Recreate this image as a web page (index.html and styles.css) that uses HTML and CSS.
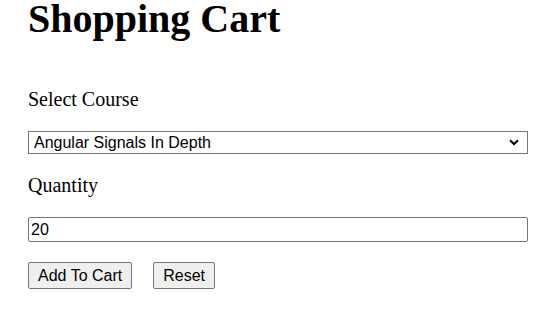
FILE: index.html
```html
<!DOCTYPE html>
<html lang="en">
<head>
    <meta charset="UTF-8">
    <meta name="viewport" content="width=device-width, initial-scale=1.0">
    <title>Shopping Cart</title>
    <link rel="stylesheet" href="styles.css">
</head>
<body>
    <div class="cart">
        <h1>Shopping Cart</h1>

        <form class="cart-form">
            <label class="field-label" for="course">Select Course</label>
            <select id="course" class="field">
                <option>Angular Signals In Depth</option>
                <option>Angular Core Deep Dive</option>
                <option>RxJs In Practice</option>
            </select>

            <label class="field-label" for="quantity">Quantity</label>
            <input id="quantity" class="field field-input" type="text" value="20">

            <div class="actions">
                <button type="button" class="btn">Add To Cart</button>
                <button type="reset" class="btn">Reset</button>
            </div>
        </form>
    </div>
</body>
</html>
```

FILE: styles.css
```css
* {
    box-sizing: border-box;
}

body {
    margin: 0;
    background: #fff;
    color: #000;
    font-family: "Liberation Serif", "Times New Roman", serif;
}

.cart {
    padding: 0 28px;
}

h1 {
    margin: 0;
    font-size: 40px;
    line-height: 38px;
    font-weight: bold;
}

/* Форма корзины */
.cart-form {
    display: flex;
    flex-direction: column;
    align-items: flex-start;
    gap: 20px;
    margin-top: 50px;
}

.field-label {
    font-size: 20px;
    line-height: 23px;
}

.field {
    width: 500px;
    margin: 0;
    font-family: "Liberation Sans", Arial, sans-serif;
    font-size: 16px;
    color: #000;
    border: 1px solid #767676;
    background-color: #fff;
}

/* Выпадающий список со своей стрелкой */
select.field {
    height: 23px;
    padding: 0 24px 0 5px;
    border-radius: 0;
    appearance: none;
    -webkit-appearance: none;
    background-image: url("data:image/svg+xml;utf8,<svg xmlns='http://www.w3.org/2000/svg' width='10' height='7' viewBox='0 0 10 7'><path d='M1 1.2 L5 5 L9 1.2' fill='none' stroke='black' stroke-width='2'/></svg>");
    background-repeat: no-repeat;
    background-position: right 8px center;
}

.field-input {
    height: 25px;
    padding: 1px 2px;
    border-radius: 2px;
}

.actions {
    display: flex;
    gap: 21px;
}

.btn {
    height: 27px;
    padding: 0 9px;
    font-family: "Liberation Sans", Arial, sans-serif;
    font-size: 16px;
    color: #000;
    background: #efefef;
    border: 1px solid #767676;
    border-radius: 2px;
}
```
